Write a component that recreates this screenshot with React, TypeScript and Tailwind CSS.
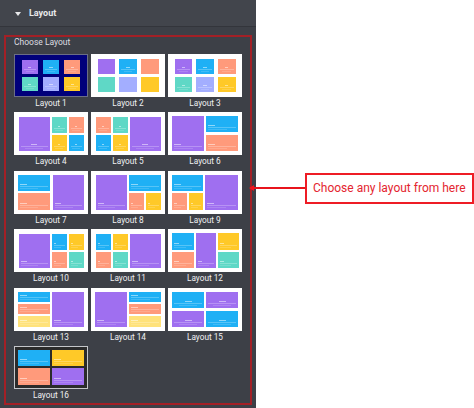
const purple = 'bg-[#9f6ff0]'
const blue = 'bg-[#1fb0f5]'
const salmon = 'bg-[#ff9a7b]'
const teal = 'bg-[#5fd8c6]'
const peri = 'bg-[#a3aeff]'
const yellow = 'bg-[#ffc928]'
const paleYellow = 'bg-[#ffe27a]'

type Tile = { color: string; span?: string; text?: 'center' | 'left' | 'none' }
type LayoutItem = { name: string; frame?: string; grid: string; tiles: Tile[] }

const sixGrid = 'grid-cols-3 grid-rows-2 gap-x-[4.5px] gap-y-[3.5px] px-[6.5px] py-[5px]'
const bigLeft = 'grid-cols-[31px_15px_15px] grid-rows-2 gap-x-[2px] gap-y-[2px] px-[4.5px] py-[4.5px]'
const bigRight = 'grid-cols-[15px_15px_31px] grid-rows-2 gap-x-[2px] gap-y-[2px] px-[4.5px] py-[4.5px]'

const layouts: LayoutItem[] = [
  {
    name: 'Layout 1',
    frame: 'bg-[#00007a] border border-[#6b6e85]',
    grid: sixGrid,
    tiles: [
      { color: purple, text: 'center' },
      { color: blue, text: 'center' },
      { color: salmon, text: 'center' },
      { color: teal, text: 'center' },
      { color: peri, text: 'center' },
      { color: yellow, text: 'center' },
    ],
  },
  {
    name: 'Layout 2',
    grid: sixGrid,
    tiles: [
      { color: purple, text: 'none' },
      { color: blue, text: 'center' },
      { color: salmon, text: 'none' },
      { color: teal, text: 'none' },
      { color: peri, text: 'none' },
      { color: yellow, text: 'none' },
    ],
  },
  {
    name: 'Layout 3',
    grid: sixGrid,
    tiles: [
      { color: purple, text: 'center' },
      { color: blue, text: 'center' },
      { color: salmon, text: 'center' },
      { color: teal, text: 'center' },
      { color: peri, text: 'center' },
      { color: yellow, text: 'center' },
    ],
  },
  {
    name: 'Layout 4',
    grid: bigLeft,
    tiles: [
      { color: purple, span: 'row-span-2', text: 'center' },
      { color: teal, text: 'center' },
      { color: salmon, text: 'center' },
      { color: yellow, text: 'center' },
      { color: blue, text: 'center' },
    ],
  },
  {
    name: 'Layout 5',
    grid: bigRight,
    tiles: [
      { color: salmon, text: 'center' },
      { color: teal, text: 'center' },
      { color: purple, span: 'col-start-3 row-start-1 row-span-2', text: 'center' },
      { color: blue, text: 'center' },
      { color: yellow, text: 'center' },
    ],
  },
  {
    name: 'Layout 6',
    grid: 'grid-cols-2 grid-rows-2 gap-x-[2px] gap-y-[3px] px-[4px] py-[4px]',
    tiles: [
      { color: purple, span: 'row-span-2', text: 'left' },
      { color: blue, text: 'left' },
      { color: salmon, text: 'left' },
    ],
  },
  {
    name: 'Layout 7',
    grid: 'grid-cols-2 grid-rows-2 gap-x-[3px] gap-y-[2px] px-[4px] py-[4px]',
    tiles: [
      { color: blue, text: 'left' },
      { color: purple, span: 'col-start-2 row-start-1 row-span-2', text: 'left' },
      { color: salmon, text: 'left' },
    ],
  },
  {
    name: 'Layout 8',
    grid: 'grid-cols-[31px_15px_15px] grid-rows-2 gap-x-[2px] gap-y-[2px] px-[4.5px] py-[4px]',
    tiles: [
      { color: purple, span: 'row-span-2', text: 'left' },
      { color: blue, span: 'col-span-2', text: 'left' },
      { color: salmon, text: 'left' },
      { color: yellow, text: 'left' },
    ],
  },
  {
    name: 'Layout 9',
    grid: 'grid-cols-[14.5px_14.5px_33px] grid-rows-2 gap-x-[2px] gap-y-[2px] px-[4px] py-[4px]',
    tiles: [
      { color: blue, span: 'col-span-2', text: 'left' },
      { color: purple, span: 'col-start-3 row-start-1 row-span-2', text: 'left' },
      { color: salmon, text: 'left' },
      { color: yellow, text: 'left' },
    ],
  },
  {
    name: 'Layout 10',
    grid: bigLeft,
    tiles: [
      { color: purple, span: 'row-span-2', text: 'left' },
      { color: blue, text: 'left' },
      { color: yellow, text: 'left' },
      { color: salmon, text: 'left' },
      { color: teal, text: 'left' },
    ],
  },
  {
    name: 'Layout 11',
    grid: bigRight,
    tiles: [
      { color: blue, text: 'left' },
      { color: yellow, text: 'left' },
      { color: purple, span: 'col-start-3 row-start-1 row-span-2', text: 'left' },
      { color: salmon, text: 'left' },
      { color: teal, text: 'left' },
    ],
  },
  {
    name: 'Layout 12',
    grid: 'grid-cols-[22px_20px_21px] grid-rows-2 gap-x-[2px] gap-y-[2px] px-[4px] py-[4px]',
    tiles: [
      { color: blue, text: 'left' },
      { color: purple, span: 'row-span-2', text: 'left' },
      { color: yellow, text: 'left' },
      { color: salmon, text: 'left' },
      { color: teal, text: 'left' },
    ],
  },
  {
    name: 'Layout 13',
    grid: 'grid-cols-2 grid-rows-3 gap-x-[2px] gap-y-[2px] px-[4px] py-[4px]',
    tiles: [
      { color: blue, text: 'left' },
      { color: purple, span: 'col-start-2 row-start-1 row-span-3', text: 'left' },
      { color: salmon, text: 'left' },
      { color: paleYellow, text: 'left' },
    ],
  },
  {
    name: 'Layout 14',
    grid: 'grid-cols-2 grid-rows-3 gap-x-[2px] gap-y-[2px] px-[4px] py-[4px]',
    tiles: [
      { color: purple, span: 'row-span-3', text: 'left' },
      { color: blue, text: 'left' },
      { color: salmon, text: 'left' },
      { color: paleYellow, text: 'left' },
    ],
  },
  {
    name: 'Layout 15',
    grid: 'grid-cols-2 grid-rows-2 gap-x-[2px] gap-y-[3px] px-[4px] py-[4px]',
    tiles: [
      { color: blue, text: 'center' },
      { color: purple, text: 'center' },
      { color: purple, text: 'center' },
      { color: blue, text: 'center' },
    ],
  },
  {
    name: 'Layout 16',
    frame: 'bg-[#2b2b2b] border border-[#c4c6ca]',
    grid: 'grid-cols-2 grid-rows-2 gap-x-[2px] gap-y-[2px] px-[3px] py-[3px]',
    tiles: [
      { color: blue, text: 'left' },
      { color: yellow, text: 'left' },
      { color: salmon, text: 'left' },
      { color: purple, text: 'left' },
    ],
  },
]

function TileLines({ text }: { text?: 'center' | 'left' | 'none' }) {
  if (text === 'none') return null
  const align = text === 'center' ? 'items-center' : 'items-start'
  return (
    <div className={`mt-auto flex flex-col gap-[1px] px-[2px] pb-[2px] ${align}`}>
      <div className="h-[1px] w-1/4 bg-white/50" />
      <div className="h-[1px] w-full bg-white/25" />
      <div className="h-[1px] w-2/3 bg-white/15" />
    </div>
  )
}

function Thumb({ item }: { item: LayoutItem }) {
  return (
    <div className="flex flex-col items-center">
      <div className={`grid h-[43px] w-[74px] ${item.grid} ${item.frame ?? 'bg-white'}`}>
        {item.tiles.map((tile, i) => (
          <div key={i} className={`flex flex-col overflow-hidden ${tile.color} ${tile.span ?? ''}`}>
            <TileLines text={tile.text} />
          </div>
        ))}
      </div>
      <span className="text-[8.25px] leading-[13px] text-[#f0f1f3]">{item.name}</span>
    </div>
  )
}

export default function App() {
  return (
    <div className="flex h-[408px] w-[474px] overflow-hidden bg-white font-['Roboto',sans-serif]">
      {/* Sidebar */}
      <div className="flex w-[256px] shrink-0 flex-col bg-[#3d4047]">
        <div className="flex h-[27px] items-center gap-[8px] border-b border-[#33353b] bg-[#42454c] pt-[2px] pl-[15px]">
          <svg width="6" height="4" viewBox="0 0 6 4" className="fill-[#e8e9eb]">
            <path d="M0 0h6L3 4z" />
          </svg>
          <span className="text-[9px] font-bold text-[#e8e9eb]">Layout</span>
        </div>

        {/* Annotated area */}
        <div className="mt-[8px] ml-[4px] h-[370px] w-[248px] border-2 border-[#a32026] pl-[8px]">
          <div className="text-[8.5px] leading-[10px] text-[#dcdde0]">Choose Layout</div>
          <div className="mt-[7px] grid grid-cols-[repeat(3,74px)] gap-x-[3px] gap-y-[2.4px]">
            {layouts.map((item) => (
              <Thumb key={item.name} item={item} />
            ))}
          </div>
        </div>
      </div>

      {/* Callout */}
      <div className="flex flex-1 items-center pb-[32px]">
        <div className="-ml-[7px] flex items-center">
          <svg width="5" height="6" viewBox="0 0 5 6" className="fill-[#f0141c]">
            <path d="M0 3l5-3v6z" />
          </svg>
          <div className="h-[1.5px] w-[51px] bg-[#e8141c]" />
        </div>
        <div className="flex h-[31px] w-[169px] shrink-0 items-center border-2 border-[#ee1c25] pl-[6px] text-[12px] whitespace-nowrap text-[#e4252f]">
          Choose any layout from here
        </div>
      </div>
    </div>
  )
}
